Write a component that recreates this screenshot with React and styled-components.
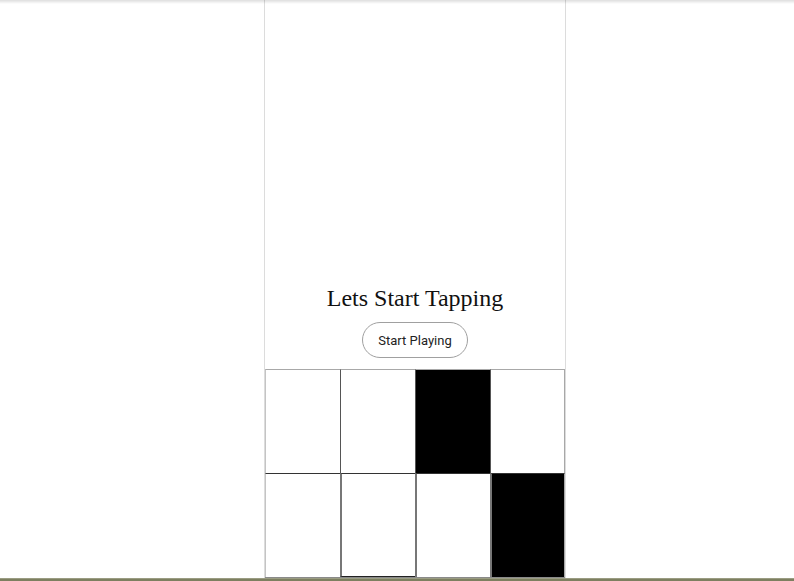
import React from "react";
import styled, { createGlobalStyle } from "styled-components";

const Global = createGlobalStyle`
  html, body { margin: 0; padding: 0; background: #fff; }
  body { font-family: "Liberation Serif", "Times New Roman", serif; overflow: hidden; }
`;

const TopShade = styled.div`
  position: fixed;
  top: 0;
  left: 0;
  right: 0;
  height: 4px;
  background: linear-gradient(rgba(0, 0, 0, 0.13), rgba(0, 0, 0, 0));
  pointer-events: none;
`;

const Page = styled.div`
  display: flex;
  flex-direction: column;
  height: 581px;
`;

const Column = styled.main`
  margin-left: 264px;
  width: 300px;
  height: 578px;
  flex: none;
  border-left: 1px solid #dcdcdc;
  border-right: 1px solid #dcdcdc;
  display: flex;
  flex-direction: column;
  justify-content: flex-end;
  align-items: stretch;
`;

const Title = styled.h1`
  margin: 0 0 10px;
  font-family: "Liberation Serif", "Times New Roman", serif;
  font-weight: normal;
  font-size: 24px;
  line-height: 27px;
  color: #111;
  text-align: center;
`;

const StartButton = styled.button`
  align-self: center;
  margin: 0 0 11px;
  height: 36px;
  padding: 0 15px;
  border: 1px solid #a0a0a0;
  border-radius: 18px;
  background: #fff;
  color: #222;
  font-family: Roboto, "Liberation Sans", Arial, sans-serif;
  font-size: 13px;
  cursor: pointer;
`;

const Board = styled.div`
  display: grid;
  grid-template-columns: repeat(4, 75px);
  grid-template-rows: repeat(2, 104px);
  border-bottom: 1px solid #8a8a8a;
`;

const Tile = styled.div`
  box-sizing: border-box;
  background: ${(p) => (p.$black ? "#000" : "#fff")};
  border-top: 1px solid ${(p) => (p.$row === 0 ? "#a8a8a8" : "#333")};
  border-left: ${(p) =>
    p.$col === 0 ? "1px solid #c4c4c4" : p.$row === 0 ? "1px solid #555" : "2px solid #777"};
  border-right: ${(p) => (p.$col === 3 ? "1px solid #a8a8a8" : "none")};
  border-bottom: ${(p) => (p.$row === 1 && p.$col === 1 ? "1px solid #222" : "none")};
`;

const Footer = styled.footer`
  flex: 1;
  background: #7d7f60;
  border-top: 1px solid #9a9c82;
`;

const rows = [
  [false, false, true, false],
  [false, false, false, true],
];

export default function App() {
  return (
    <>
      <Global />
      <Page>
        <Column>
          <Title>Lets Start Tapping</Title>
          <StartButton type="button">Start Playing</StartButton>
          <Board>
            {rows.map((r, ri) =>
              r.map((b, ci) => (
                <Tile key={`${ri}-${ci}`} $black={b} $row={ri} $col={ci} />
              ))
            )}
          </Board>
        </Column>
        <Footer />
      </Page>
      <TopShade />
    </>
  );
}
